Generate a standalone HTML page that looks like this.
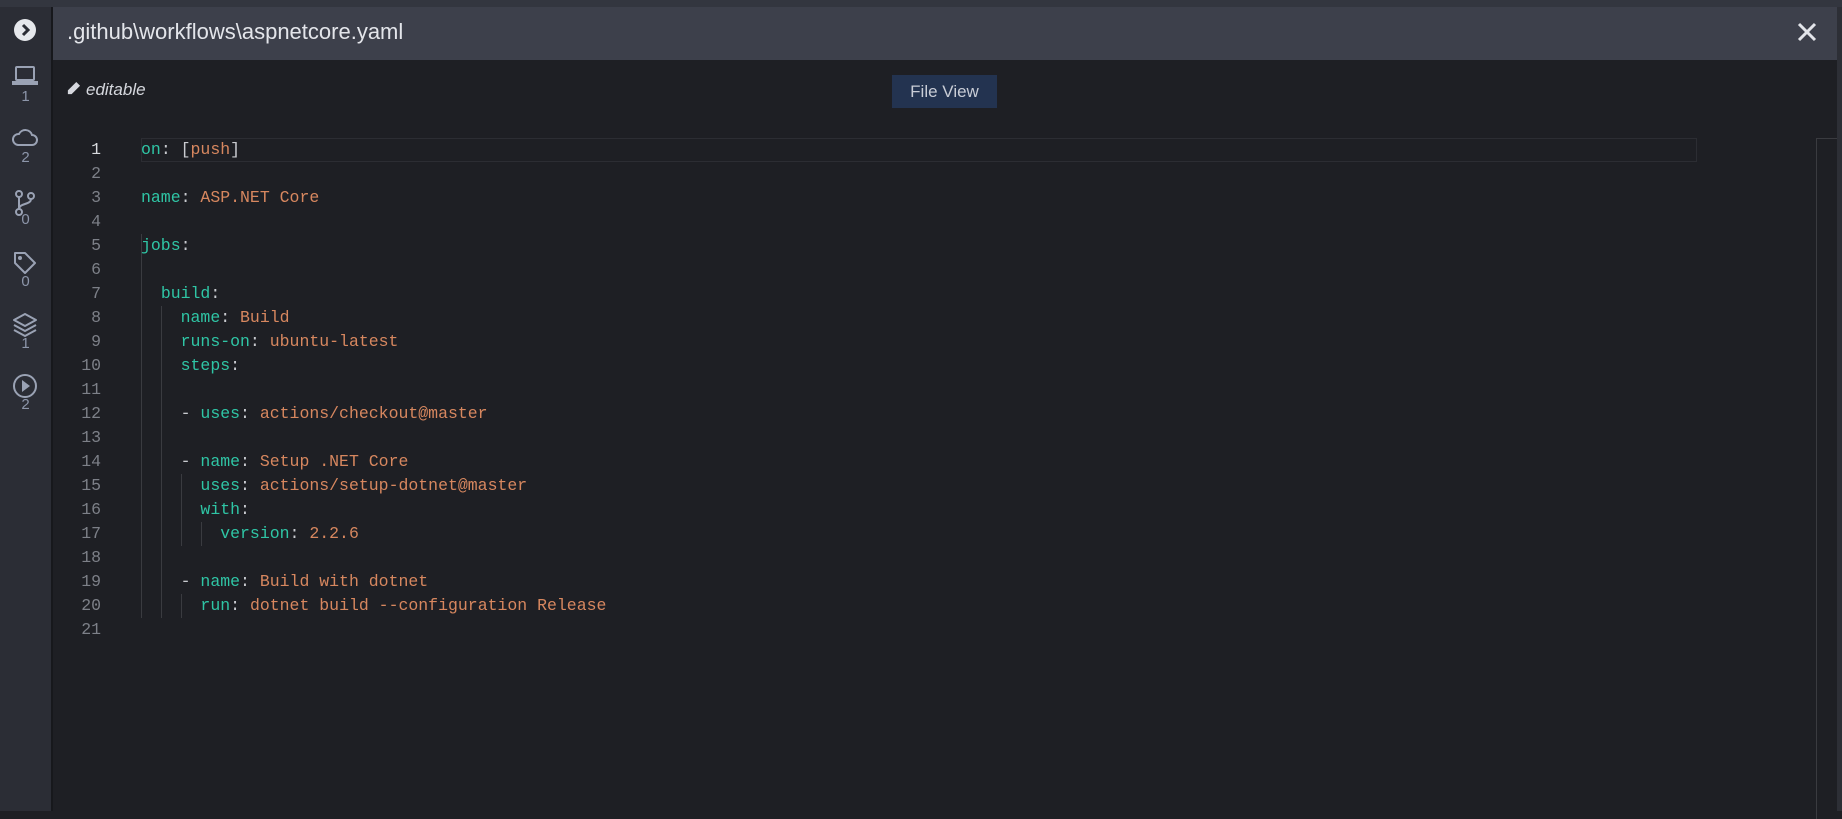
<!DOCTYPE html>
<html><head><style>
body{margin:0;width:1842px;height:811px;background:#1e1f24;overflow:hidden;font-family:"Liberation Sans",sans-serif;position:relative}
.top{position:absolute;left:0;top:0;width:1842px;height:7px;background:#33363f}
.side{position:absolute;left:0;top:7px;width:51px;height:804px;background:#2b2d35}
.sb{position:absolute;left:51px;top:7px;width:2px;height:804px;background:#17181c}
.hdr{position:absolute;left:53px;top:7px;width:1784px;height:53px;background:#3d404b}
.title{position:absolute;left:67px;top:19px;font-size:22px;color:#e3e5ea}
.x{position:absolute;left:1797px;top:22px}
.ed{position:absolute;left:53px;top:60px;width:1784px;height:751px;background:#1e1f24}
.edit{position:absolute;left:86px;top:80px;font-style:italic;font-size:17px;color:#d6d8de}
.btn{position:absolute;left:892px;top:75px;width:105px;height:33px;background:#233350;color:#c9cdd6;font-size:17px;line-height:33px;text-align:center}
.code{position:absolute;left:0;top:138px;font-family:"Liberation Mono",monospace;font-size:16.5px;line-height:24px;white-space:pre}
.ln{position:absolute;width:101px;text-align:right;color:#7d8088}
.l{position:absolute;left:141px}
.k{color:#2fc5a5}.v{color:#d7875f}.p{color:#c9cbd0}
.hl{position:absolute;left:141px;top:138px;width:1554px;height:22px;border:1px solid #2c2d33}
.g{position:absolute;width:1px;background:#3a3b40}
.scr{position:absolute;left:1837px;top:7px;width:5px;height:804px;background:#2d2f36}
.mm{position:absolute;left:1816px;top:138px;width:20px;height:680px;border-left:1px solid #3a3b40;border-top:1px solid #3a3b40}
.ic{position:absolute;left:12px}
.n{position:absolute;width:51px;text-align:center;color:#8d96aa;font-size:15px}
</style></head><body>
<div class="top"></div>
<div class="side">
<svg class="ic" style="left:13px;top:11px" width="24" height="24" viewBox="0 0 24 24"><circle cx="12" cy="12" r="11" fill="#e6e8ec"/><path d="M10 7l5 5-5 5" stroke="#2b2d35" stroke-width="3" fill="none"/></svg>
<svg class="ic" style="top:58px" width="26" height="22" viewBox="0 0 26 22"><rect x="4" y="2" width="18" height="13" rx="1" fill="none" stroke="#9aa2b4" stroke-width="2"/><path d="M1 17h24v2H1z" fill="none" stroke="#9aa2b4" stroke-width="2"/></svg>
<div class="n" style="top:81px">1</div>
<svg class="ic" style="top:120px" width="26" height="20" viewBox="0 0 26 20"><path d="M6 18h14a5 5 0 0 0 0-10 7 7 0 0 0-13-1 5.5 5.5 0 0 0-1 11z" fill="none" stroke="#9aa2b4" stroke-width="2"/></svg>
<div class="n" style="top:142px">2</div>
<svg class="ic" style="left:14px;top:182px" width="22" height="28" viewBox="0 0 22 28"><circle cx="5" cy="5" r="3" fill="none" stroke="#9aa2b4" stroke-width="2"/><circle cx="17" cy="7" r="3" fill="none" stroke="#9aa2b4" stroke-width="2"/><circle cx="5" cy="23" r="3" fill="none" stroke="#9aa2b4" stroke-width="2"/><path d="M5 8v12M17 10c0 6-12 4-12 10" fill="none" stroke="#9aa2b4" stroke-width="2"/></svg>
<div class="n" style="top:204px">0</div>
<svg class="ic" style="top:243px" width="26" height="26" viewBox="0 0 26 26"><path d="M3 3h10l10 10-10 10L3 13z" fill="none" stroke="#9aa2b4" stroke-width="2" stroke-linejoin="round"/><circle cx="8" cy="8" r="2" fill="#9aa2b4"/></svg>
<div class="n" style="top:266px">0</div>
<svg class="ic" style="top:305px" width="26" height="26" viewBox="0 0 26 26"><path d="M13 2L2 8l11 6 11-6z M2 13l11 6 11-6 M2 18l11 6 11-6" fill="none" stroke="#9aa2b4" stroke-width="2" stroke-linejoin="round"/></svg>
<div class="n" style="top:328px">1</div>
<svg class="ic" style="top:366px" width="26" height="26" viewBox="0 0 26 26"><circle cx="13" cy="13" r="11" fill="none" stroke="#9aa2b4" stroke-width="2"/><path d="M10 7l8 6-8 6z" fill="#9aa2b4"/></svg>
<div class="n" style="top:389px">2</div>
</div>
<div class="sb"></div>
<div class="hdr"></div>
<div class="title">.github\workflows\aspnetcore.yaml</div>
<svg class="x" width="20" height="20" viewBox="0 0 20 20"><path d="M2 2l16 16M18 2L2 18" stroke="#e3e5ea" stroke-width="3"/></svg>
<div class="edit"><svg width="15" height="15" viewBox="0 0 16 16" style="vertical-align:-1px;margin-left:-20px;margin-right:5px"><path d="M11 1l4 4-9 9H2v-4z" fill="#d6d8de"/></svg>editable</div>
<div class="btn">File View</div>
<div class="hl"></div>
<div class="g" style="left:141px;top:234px;height:384px"></div>
<div class="g" style="left:161px;top:306px;height:312px"></div>
<div class="g" style="left:181px;top:474px;height:72px"></div>
<div class="g" style="left:181px;top:594px;height:24px"></div>
<div class="g" style="left:201px;top:522px;height:24px"></div>
<div class="code">
<div class="ln" style="top:0;color:#d8dade">1</div><div class="l" style="top:0"><span class="k">on</span><span class="p">: </span><span class="p">[</span><span class="v">push</span><span class="p">]</span></div>
<div class="ln" style="top:24px">2</div>
<div class="ln" style="top:48px">3</div><div class="l" style="top:48px"><span class="k">name</span><span class="p">: </span><span class="v">ASP.NET Core</span></div>
<div class="ln" style="top:72px">4</div>
<div class="ln" style="top:96px">5</div><div class="l" style="top:96px"><span class="k">jobs</span><span class="p">:</span></div>
<div class="ln" style="top:120px">6</div>
<div class="ln" style="top:144px">7</div><div class="l" style="top:144px">  <span class="k">build</span><span class="p">:</span></div>
<div class="ln" style="top:168px">8</div><div class="l" style="top:168px">    <span class="k">name</span><span class="p">: </span><span class="v">Build</span></div>
<div class="ln" style="top:192px">9</div><div class="l" style="top:192px">    <span class="k">runs-on</span><span class="p">: </span><span class="v">ubuntu-latest</span></div>
<div class="ln" style="top:216px">10</div><div class="l" style="top:216px">    <span class="k">steps</span><span class="p">:</span></div>
<div class="ln" style="top:240px">11</div>
<div class="ln" style="top:264px">12</div><div class="l" style="top:264px"><span class="p">    - </span><span class="k">uses</span><span class="p">: </span><span class="v">actions/checkout@master</span></div>
<div class="ln" style="top:288px">13</div>
<div class="ln" style="top:312px">14</div><div class="l" style="top:312px"><span class="p">    - </span><span class="k">name</span><span class="p">: </span><span class="v">Setup .NET Core</span></div>
<div class="ln" style="top:336px">15</div><div class="l" style="top:336px">      <span class="k">uses</span><span class="p">: </span><span class="v">actions/setup-dotnet@master</span></div>
<div class="ln" style="top:360px">16</div><div class="l" style="top:360px">      <span class="k">with</span><span class="p">:</span></div>
<div class="ln" style="top:384px">17</div><div class="l" style="top:384px">        <span class="k">version</span><span class="p">: </span><span class="v">2.2.6</span></div>
<div class="ln" style="top:408px">18</div>
<div class="ln" style="top:432px">19</div><div class="l" style="top:432px"><span class="p">    - </span><span class="k">name</span><span class="p">: </span><span class="v">Build with dotnet</span></div>
<div class="ln" style="top:456px">20</div><div class="l" style="top:456px">      <span class="k">run</span><span class="p">: </span><span class="v">dotnet build --configuration Release</span></div>
<div class="ln" style="top:480px">21</div>
</div>
<div class="mm"></div>
<div class="scr"></div>
</body></html>
